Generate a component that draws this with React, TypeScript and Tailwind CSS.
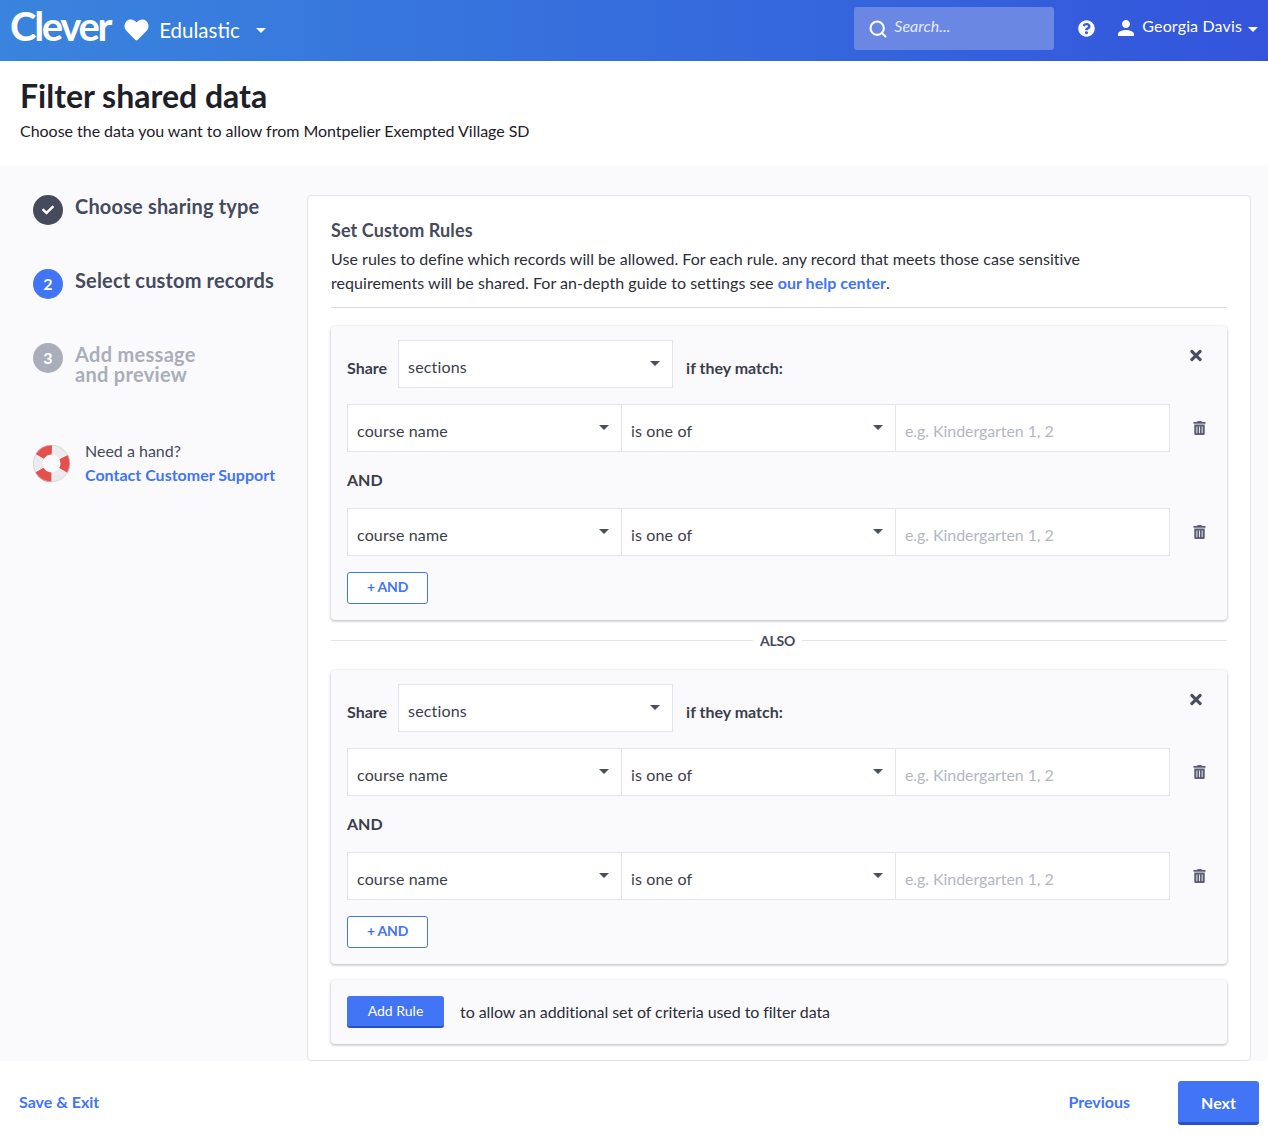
import { FaCheck, FaHeart, FaQuestionCircle, FaTimes, FaTrashAlt } from "react-icons/fa";
import { MdPerson } from "react-icons/md";
import { Search } from "lucide-react";

function Caret({ className = "" }: { className?: string }) {
  return <span className={`inline-block h-0 w-0 border-x-[5px] border-t-[5px] border-x-transparent ${className}`} />;
}

function Select({ value }: { value: string }) {
  return (
    <div className="relative flex h-12 w-[275px] shrink-0 items-center border border-[#e3e4ea] bg-white pl-[9px] pt-[6px] text-[16px] tracking-[0.15px] text-[#3b3e4a]">
      {value}
      <Caret className="absolute right-[12px] top-[20px] border-t-[#4a4f5f]" />
    </div>
  );
}

function Condition() {
  return (
    <div className="flex items-center">
      <Select value="course name" />
      <div className="-ml-[1px]">
        <Select value="is one of" />
      </div>
      <div className="-ml-[1px] flex h-12 w-[275px] items-center border border-[#e3e4ea] bg-white pl-[9px] pt-[6px] text-[16px] tracking-[-0.08px] text-[#b4b7c3]">
        e.g. Kindergarten 1, 2
      </div>
      <FaTrashAlt className="ml-[23px] -mt-[1px] h-[14px] w-[13px] text-[#5a6072]" />
    </div>
  );
}

function RuleCard() {
  return (
    <div className="relative flex flex-col rounded-[4px] bg-[#fafafd] p-[14px_16px_16px] shadow-[0_1px_3px_rgba(30,32,45,0.35)]">
      <div className="flex items-center">
        <span className="mr-[11px] pt-[8px] text-[16px] font-bold text-[#3b3e4a]">Share</span>
        <Select value="sections" />
        <span className="ml-[13px] pt-[8px] text-[16px] font-bold text-[#3b3e4a]">if they match:</span>
      </div>
      <FaTimes className="absolute right-[24px] top-[21px] h-[17px] w-[14px] text-[#4a4f5f]" />
      <div className="mt-4">
        <Condition />
      </div>
      <div className="flex h-14 items-center pb-[1px] text-[16px] font-bold text-[#3b3e4a]">AND</div>
      <Condition />
      <button className="mt-4 h-8 w-[81px] rounded-[3px] border border-[#4274f6] bg-white pb-[3px] text-[14px] font-bold tracking-[-0.2px] text-[#4274f6]">
        + AND
      </button>
    </div>
  );
}

function Step({ mark, label, tone }: { mark: React.ReactNode; label: React.ReactNode; tone: string }) {
  const circle = tone === "done" ? "bg-[#454a5c]" : tone === "active" ? "bg-[#4274f6]" : "bg-[#a9aeba]";
  const text = tone === "todo" ? "text-[#a9aeba] tracking-[0.3px]" : "text-[#454a5c] tracking-[0.16px]";
  return (
    <div className="flex">
      <div className={`flex h-[30px] w-[30px] shrink-0 items-center justify-center rounded-full text-[16px] font-bold text-white ${circle}`}>
        {mark}
      </div>
      <div className={`ml-[12px] mt-[1px] text-[20px] font-bold leading-[20px] ${text}`}>{label}</div>
    </div>
  );
}

function LifeRing() {
  return (
    <svg width="37" height="37" viewBox="0 0 37 37">
      <circle cx="18.5" cy="18.5" r="13.75" fill="none" stroke="#ececee" strokeWidth="9.5" />
      <circle cx="18.5" cy="18.5" r="13.75" fill="none" stroke="#e5504c" strokeWidth="9.5" strokeDasharray="14.4 14.4" strokeDashoffset="7.2" />
      <circle cx="18.5" cy="18.5" r="18.2" fill="none" stroke="#c9c9cc" strokeWidth="0.6" />
    </svg>
  );
}

export default function App() {
  return (
    <div className="min-h-[1143px] bg-white font-['Lato',sans-serif] text-[16px] text-[#1e2029]">
      <header className="flex h-[61px] items-center bg-gradient-to-r from-[#3a84dd] to-[#3454dc] pb-[4px] pl-[10px] pr-[10px] text-white shadow-[0_1px_3px_rgba(30,32,45,0.2)]">
        <span className="-mt-[6px] text-[40px] font-bold leading-none tracking-[-2.3px]">Clever</span>
        <FaHeart className="ml-[14px] mt-[2px] h-[24px] w-[25px]" />
        <span className="ml-[10px] mt-[4px] text-[20.5px]">Edulastic</span>
        <Caret className="ml-[16px] mt-[3px] border-t-white" />
        <div className="ml-auto flex h-[43px] w-[200px] items-center rounded-[3px] bg-[#6b87e4] pl-[14px] text-[16px] italic text-[#e4e9fa]">
          <Search className="h-5 w-5 text-white" strokeWidth={2.5} />
          <span className="-mt-[6px] ml-[6px]">Search...</span>
        </div>
        <FaQuestionCircle className="ml-6 h-[17px] w-[17px]" />
        <MdPerson className="-mt-[2px] ml-[19px] h-[24px] w-[24px]" />
        <span className="-mt-[6px] ml-[4px] text-[16px] tracking-[0.15px]">Georgia Davis</span>
        <Caret className="ml-[6px] mt-[1px] border-t-white" />
      </header>

      <div className="h-[105px] bg-white px-5 pt-[16px] shadow-[0_1px_2px_rgba(30,32,45,0.08)]">
        <h1 className="text-[32px] font-bold leading-[37px] text-[#1e2029]">Filter shared data</h1>
        <p className="mt-[7px] text-[16px] leading-5 tracking-[-0.03px]">Choose the data you want to allow from Montpelier Exempted Village SD</p>
      </div>

      <div className="flex h-[895px] bg-[#fafafd] pr-[17px] pt-[29px]">
        <aside className="w-[307px] shrink-0 pl-[33px]">
          <Step tone="done" mark={<FaCheck className="h-[12px] w-[12px]" />} label="Choose sharing type" />
          <div className="mt-[44px]">
            <Step tone="active" mark="2" label="Select custom records" />
          </div>
          <div className="mt-[44px]">
            <Step tone="todo" mark="3" label={<>Add message<br />and preview</>} />
          </div>
          <div className="mt-[55px] flex items-center">
            <LifeRing />
            <div className="ml-[15px] pb-[1px] leading-6">
              <div className="text-[#454a5c]">Need a hand?</div>
              <div className="font-bold text-[#4274f6]">Contact Customer Support</div>
            </div>
          </div>
        </aside>

        <main className="h-[866px] flex-1 rounded-[4px] border border-[#e3e4ea] bg-white px-[23px] pt-[24px]">
          <h2 className="text-[18px] font-bold leading-5 tracking-[0.1px] text-[#454a5c]">Set Custom Rules</h2>
          <p className="mt-[7px] max-w-[780px] text-[16px] leading-6 tracking-[0.045px] text-[#2b2d38]">
            Use rules to define which records will be allowed. For each rule. any record that meets those case sensitive requirements will be shared. For an-depth guide to settings see{" "}
            <span className="font-bold text-[#4274f6]">our help center</span>.
          </p>
          <div className="mt-[12px] border-t border-[#d9dae0]" />
          <div className="mt-[18px]">
            <RuleCard />
          </div>
          <div className="flex h-[50px] items-center pb-[10px] text-[14px] font-bold tracking-[-0.2px] text-[#454a5c]">
            <div className="w-[422px] border-t border-[#e3e4ea]" />
            <span className="mx-[7px]">ALSO</span>
            <div className="flex-1 border-t border-[#e3e4ea]" />
          </div>
          <RuleCard />
          <div className="mt-4 flex h-16 items-center rounded-[4px] bg-[#fafafd] pl-4 shadow-[0_1px_3px_rgba(30,32,45,0.35)]">
            <button className="h-8 w-[97px] rounded-[3px] border-b-2 border-[#2a51c4] bg-[#4274f6] pb-[1px] text-[14px] text-white">Add Rule</button>
            <span className="ml-4 tracking-[-0.07px] text-[#2b2d38]">to allow an additional set of criteria used to filter data</span>
          </div>
        </main>
      </div>

      <footer className="flex h-[82px] items-start bg-white pl-[19px] pr-[9px] pt-[20px] text-[16px] font-bold text-[#4274f6]">
        <span className="mt-[9px]">Save &amp; Exit</span>
        <span className="ml-auto mt-[9px]">Previous</span>
        <button className="ml-12 h-11 w-[81px] rounded-[3px] border-b-[3px] border-[#2a51c4] bg-[#4274f6] pt-[2px] text-white">Next</button>
      </footer>
    </div>
  );
}
